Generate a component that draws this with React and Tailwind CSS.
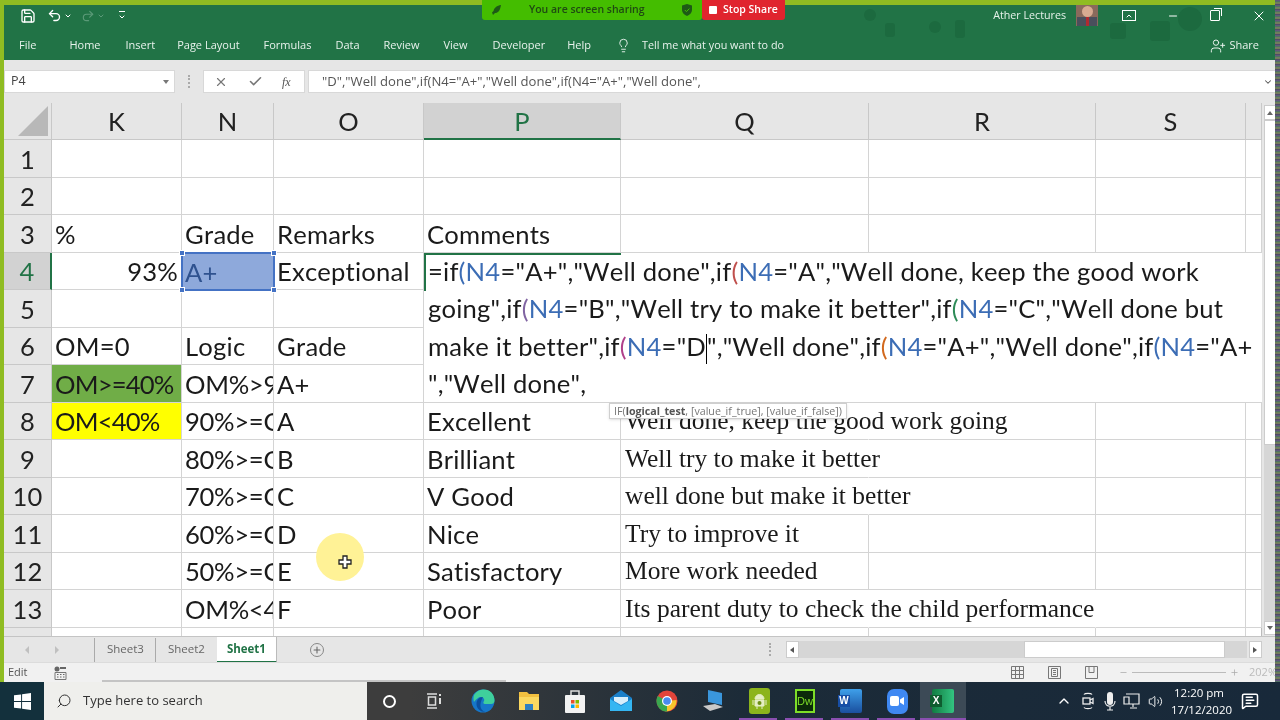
import React from 'react';
import { Save, Undo2, Redo2, Lightbulb, UserPlus, X, Check, ChevronDown, Minus, Plus, ChevronUp, Volume2, MessageSquareText, Search } from 'lucide-react';

const sans = "font-['Lato','Open_Sans',sans-serif] [font-kerning:none] tracking-[0.2px]";

const Win = () => (
  <svg width="17" height="17" viewBox="0 0 16 16"><path fill="#fff" d="M0 2.2 6.7 1.3v6.2H0zM7.6 1.2 16 0v7.5H7.6zM0 8.4h6.7v6.3L0 13.8zM7.6 8.4H16V16l-8.4-1.2z"/></svg>
);
const Edge = () => (
  <svg width="24" height="24" viewBox="0 0 24 24"><circle cx="12" cy="12" r="11.5" fill="#1676c9"/><path d="M3 6C6 1.500 10 .5 13 .5c6 0 10.500 4.500 10.500 11 0 2.500-1.500 3.500-3.500 3.500h-6c-2 0-2-1.500-1-3 .8-1.500-.5-4-3.500-4C8 8 5 10 3 13c-.8-2.500-.6-5 0-7z" fill="#3fcf9c"/><path d="M12 8c-4 0-6.500 3-6.500 7 0 4.500 4 8 9 8-3.500-1-5.500-4-5-8 .3-2.500 1.500-5 2.500-7z" fill="#0c4f9e"/></svg>
);
const Folder = () => (
  <svg width="22" height="22" viewBox="0 0 22 22"><path d="M1 2h8l2 2h10v16H1z" fill="#f2c040"/><path d="M1 7h20v13H1z" fill="#fbd860"/><rect x="7" y="14" width="8" height="6" fill="#2f7fc1"/></svg>
);
const Store = () => (
  <svg width="24" height="26" viewBox="0 0 24 26"><path d="M8 7V3h8v4" fill="none" stroke="#ddd" strokeWidth="1.5"/><rect x="2" y="7" width="20" height="18" rx="1" fill="#f2f2f2"/><rect x="8" y="12" width="3.5" height="3.5" fill="#e8502c"/><rect x="12.500" y="12" width="3.5" height="3.5" fill="#7fba00"/><rect x="8" y="16.500" width="3.5" height="3.5" fill="#00a4ef"/><rect x="12.500" y="16.500" width="3.5" height="3.5" fill="#ffb900"/></svg>
);
const Mail = () => (
  <svg width="24" height="24" viewBox="0 0 24 24"><path d="M1 9 12 1l11 8v13H1z" fill="#1a7fc9"/><path d="M1 10l11 7 11-7v12H1z" fill="#35b6f2"/><path d="M5 8h14v4l-7 4-7-4z" fill="#d8eefb"/></svg>
);
const Chrome = () => (
  <svg width="22" height="22" viewBox="0 0 22 22"><circle cx="11" cy="11" r="10.5" fill="#e2443a"/><path d="M11 11 1.800 16A10.500 10.500 0 0 1 1.800 6z" fill="#39a84f"/><path d="M11 11l9.500-1A10.500 10.500 0 0 1 9 21.300z" fill="#f7c52c"/><path d="M11 11 1.600 16A10.500 10.500 0 0 0 11 21.500z" fill="#39a84f"/><circle cx="11" cy="11" r="5" fill="#fff"/><circle cx="11" cy="11" r="3.800" fill="#4a8bf0"/></svg>
);
const Laptop = () => (
  <svg width="24" height="24" viewBox="0 0 24 24"><path d="M7 1l14 3v12L7 13z" fill="#3a96dc"/><path d="M2 17l12-2 8 3-13 4z" fill="#c9c9c9"/></svg>
);
const Android = () => (
  <div className="w-[21px] h-[26px] rounded-[3px] bg-[#8cb41c] flex items-center justify-center">
    <svg width="15" height="18" viewBox="0 0 15 18"><path d="M3 7a4.500 4.500 0 0 1 9 0zM3 8h9v6H3zM1 8v5M14 8v5M5 14v3M10 14v3" fill="#e4edc4" stroke="#e4edc4"/><circle cx="7.500" cy="11" r="2" fill="#6b8f14"/></svg>
  </div>
);
const Dw = () => (
  <div className="w-[20px] h-[24px] bg-[#0c2a0a] border-2 border-[#7ede28] flex items-center justify-center text-[#7ede28] text-[11px] font-['Liberation_Sans',sans-serif]">Dw</div>
);
const Word = () => (
  <div className="relative w-[22px] h-[24px] rounded-[2px] bg-gradient-to-b from-[#3fa0ea] to-[#1b4f9e]">
    <span className="absolute left-[-2px] top-[6px] w-[12px] h-[12px] bg-[#174ea6] text-white text-[10px] leading-[12px] font-bold text-center font-['Liberation_Sans',sans-serif]">W</span>
  </div>
);
const Zoom = () => (
  <div className="w-[21px] h-[25px] rounded-[7px] bg-[#3f88f2] flex items-center justify-center">
    <svg width="14" height="10" viewBox="0 0 14 10"><rect width="9" height="10" rx="2" fill="#fff"/><path d="M10 3.500 14 1v8l-4-2.500z" fill="#fff"/></svg>
  </div>
);
const XL = () => (
  <div className="relative w-[22px] h-[24px] rounded-[2px] bg-gradient-to-r from-[#107c41] to-[#33c481]">
    <span className="absolute left-[-2px] top-[6px] w-[12px] h-[12px] bg-[#0e5c2f] text-white text-[10px] leading-[12px] font-bold text-center font-['Liberation_Sans',sans-serif]">X</span>
  </div>
);
const TaskView = () => (
  <svg width="16" height="16" viewBox="0 0 16 16" fill="none" stroke="#ddd"><path d="M0 1h10M0 15h10" strokeWidth="1.500"/><rect x="1.500" y="4" width="7" height="8" strokeWidth="1.500"/><path d="M13 1v2M13 5v6" strokeWidth="2"/></svg>
);
const GridIcon = () => (
  <svg width="13" height="13" viewBox="0 0 13 13" fill="none" stroke="#777"><path d="M.5.5h12v12H.5zM4.500.5v12M8.500.5v12M.5 4.500h12M.5 8.500h12"/></svg>
);
const PageIcon = () => (
  <svg width="13" height="13" viewBox="0 0 13 13" fill="none" stroke="#777"><path d="M.5.5h12v12H.5zM3.500 2.500h6v8h-6zM5 4.500h3M5 6.500h3M5 8.500h3"/></svg>
);
const BreakIcon = () => (
  <svg width="13" height="13" viewBox="0 0 13 13" fill="none" stroke="#777"><path d="M.5.5h12v12H.5zM4 .5v6h5v-6"/></svg>
);
const MacroIcon = () => (
  <svg width="13" height="14" viewBox="0 0 13 14"><circle cx="3" cy="3" r="2.500" fill="#666"/><path d="M6 1h6v2H6z" fill="#666"/><path d="M1 6.500h11v7H1z" fill="none" stroke="#777"/><path d="M3 8.500h1.500M6 8.500h1.500M9 8.500h1.500M3 11h1.500M6 11h1.500M9 11h1.500" stroke="#666"/></svg>
);
const Meet = () => (
  <svg width="14" height="18" viewBox="0 0 14 18" fill="none" stroke="#eee" strokeWidth="1.300"><path d="M3 2.500C4 1 10 1 11 2.500M3 15.500c1 1.500 7 1.500 8 0"/><rect x="2" y="6" width="7" height="6"/><path d="M9 8l3-1.500v5L9 10"/></svg>
);
const MicIcon = () => (
  <svg width="12" height="19" viewBox="0 0 12 19"><rect x="3" y="0" width="6" height="13" rx="3" fill="#eee"/><path d="M1 9c0 7 10 7 10 0M6 15v3M3 18h6" stroke="#eee" fill="none" strokeWidth="1.200"/></svg>
);
const Net = () => (
  <svg width="17" height="16" viewBox="0 0 17 16" fill="none" stroke="#eee" strokeWidth="1.200"><path d="M3 1h13v10H6M1 4h5v7H1zM10 11v3M7 15h7"/></svg>
);
const Shield = () => (
  <svg width="10" height="12" viewBox="0 0 10 12"><path d="M5 0l5 1.500V6c0 3-2.500 5-5 6-2.500-1-5-3-5-6V1.500z" fill="#1e5a16"/><path d="M2.800 6l1.600 1.600 3-3" stroke="#46bd00" fill="none"/></svg>
);
const Leaf = () => (
  <svg width="10" height="10" viewBox="0 0 10 10"><path d="M9 0C5 .5 2 3 1.500 6L0 7.500 1 10l2-2c3 0 5-2 6-8z" fill="#1e5a16"/></svg>
);

const rows = [
  { n: 1 }, { n: 2 },
  { n: 3, k: '%', nn: 'Grade', o: 'Remarks', p: 'Comments' },
  { n: 4, k: '93%', nn: 'A+', o: 'Exceptional' },
  { n: 5 },
  { n: 6, k: 'OM=0', nn: 'Logic', o: 'Grade' },
  { n: 7, k: 'OM>=40%', nn: 'OM%>9', o: 'A+', kc: 'bg-[#70ad47]' },
  { n: 8, k: 'OM<40%', nn: '90%>=C', o: 'A', p: 'Excellent', q: 'Well done, keep the good work going', kc: 'bg-[#ffff00]', span: 1 },
  { n: 9, nn: '80%>=C', o: 'B', p: 'Brilliant', q: 'Well try to make it better', span: 1 },
  { n: 10, nn: '70%>=C', o: 'C', p: 'V Good', q: 'well done but make it better', span: 1 },
  { n: 11, nn: '60%>=C', o: 'D', p: 'Nice', q: 'Try to improve it' },
  { n: 12, nn: '50%>=C', o: 'E', p: 'Satisfactory', q: 'More work needed' },
  { n: 13, nn: 'OM%<4', o: 'F', p: 'Poor', q: 'Its parent duty to check the child performance', span: 2 },
];

const cellBase = 'border-r border-b border-[#d4d4d4] px-[3px] pt-[1px] overflow-hidden whitespace-nowrap flex items-center text-[25.6px] text-[#1a1a1a] ' + sans;
const hdr = 'bg-[#e6e6e6] border-r border-b border-[#c8c8c8] flex items-center justify-center pt-[1px] text-[25.5px] text-[#222] ' + sans;

const Blue = ({ c }) => <><span className={c}>(</span><span className="text-[#3c6db5]">N4</span></>;

const Handle = ({ className }) => <span className={'absolute w-[6px] h-[6px] bg-[#4472c4] border border-white ' + className} />;

const AppCell = ({ children, bar, extra = '' }) => (
  <div className={'relative w-[46px] h-full flex justify-center items-center ' + extra}>
    {children}
    {bar && <span className="absolute left-[3px] right-[5px] bottom-0 h-[2px] bg-[#8a4fb0]" />}
  </div>
);

export default function App() {
  return (
    <div className="relative w-[1280px] h-[720px] overflow-hidden flex flex-col bg-[#e6e6e6] font-['Open_Sans',sans-serif] blur-[0.3px]">
      {/* Lime strip */}
      <div className="h-[5px] bg-[#8fbc22] shrink-0" />
      <div className="flex-1 flex min-h-0">
        <div className="w-[4px] bg-[#8fbc22] shrink-0" />
        <div className="flex-1 flex flex-col min-w-0">
          {/* Title bar */}
          <div className="h-[26px] bg-[#217346] flex items-center text-white shrink-0 pb-[5px]">
            <div className="ml-[16px] flex items-center">
              <Save size={16} strokeWidth={2} />
              <Undo2 size={15} className="ml-[11px]" strokeWidth={2.2} />
              <ChevronDown size={8} className="ml-[2px]" strokeWidth={3} />
              <Redo2 size={14} className="ml-[9px] text-[#5b9a78]" />
              <ChevronDown size={8} className="ml-[2px] text-[#5b9a78]" strokeWidth={3} />
              <span className="ml-[13px] flex flex-col items-center gap-[1px]">
                <span className="w-[6px] h-[1px] bg-white" />
                <ChevronDown size={8} strokeWidth={3} />
              </span>
            </div>
            <div className="ml-auto flex items-center">
              <span className="text-[10.7px] text-[#e6f2ea]">Ather Lectures</span>
              <div className="ml-[10px] w-[22px] h-[21px] bg-[#8a6a5c] flex flex-col items-center overflow-hidden">
                <span className="mt-[1px] w-[11px] h-[12px] rounded-full bg-[#d8ab92]" />
                <span className="w-[20px] h-[9px] bg-[#4a4f5c] flex justify-center"><span className="w-[3px] h-[9px] bg-[#b02a30]" /></span>
              </div>
              <span className="ml-[24px] w-[14px] h-[11px] border border-white flex items-center justify-center"><ChevronUp size={8} strokeWidth={3} /></span>
              <Minus size={12} className="ml-[31px]" />
              <span className="ml-[31px] relative w-[10px] h-[11px] border border-white rounded-[1px]"><span className="absolute -top-[3px] -right-[3px] w-[8px] h-[8px] border-t border-r border-white" /></span>
              <X size={16} className="ml-[31px] mr-[13px]" strokeWidth={1.5} />
            </div>
          </div>
          {/* Ribbon tabs */}
          <div className="h-[29px] bg-[#217346] flex items-center text-[11px] text-[#e8f2ec] shrink-0 relative">
            <span className="ml-[15px]">File</span>
            <span className="ml-[33px]">Home</span>
            <span className="ml-[25px]">Insert</span>
            <span className="ml-[22px]">Page Layout</span>
            <span className="ml-[24px]">Formulas</span>
            <span className="ml-[24px]">Data</span>
            <span className="ml-[24px]">Review</span>
            <span className="ml-[24px]">View</span>
            <span className="ml-[25px]">Developer</span>
            <span className="ml-[22px]">Help</span>
            <Lightbulb size={15} className="ml-[25px]" strokeWidth={1.5} />
            <span className="ml-[11px] text-[10.8px]">Tell me what you want to do</span>
            <span className="ml-auto mr-[21px] flex items-center gap-[3px]"><UserPlus size={16} strokeWidth={1.5} />Share</span>
          </div>
          {/* Formula bar */}
          <div className="h-[43px] bg-[#e6e6e6] flex items-center shrink-0 pr-[2px]">
            <div className="w-[171px] h-[23px] bg-white border border-[#d8d8d8] flex items-center justify-between pl-[6px] pr-[3px] text-[12.5px] text-[#444]">
              <span>P4</span><span className="w-0 h-0 border-x-[3px] border-x-transparent border-t-[4px] border-t-[#777] mr-[2px]" />
            </div>
            <div className="ml-[13px] w-[2px] h-[13px] border-l-2 border-dotted border-[#aaa]" />
            <div className="ml-[13px] w-[102px] h-[23px] bg-white border border-[#d8d8d8] flex items-center text-[#777]">
              <X size={14} className="ml-[10px]" />
              <Check size={15} className="ml-[20px]" strokeWidth={2.5} />
              <span className="ml-[19px] text-[12px] italic font-['Liberation_Serif',serif] text-[#555]">fx</span>
            </div>
            <div className="ml-[3px] flex-1 h-[23px] bg-white border border-[#d8d8d8] flex items-center pl-[13px] pr-[4px] text-[13.1px] text-[#555]">
              <span className="whitespace-nowrap">"D","Well done",if(N4="A+","Well done",if(N4="A+","Well done",</span>
              <ChevronDown size={10} className="ml-auto" strokeWidth={2.5} />
            </div>
          </div>
          {/* Sheet */}
          <div className="flex-1 flex min-h-0 bg-white">
            <div className="relative w-[1258px] border-r border-[#bbb] grid grid-cols-[48px_130px_92px_150px_197px_248px_227px_150px_16px] grid-rows-[37px_repeat(13,37.5px)_8.5px] shrink-0">
              {/* Header row */}
              <div className={hdr + ' items-end justify-end'}>
                <span className="w-0 h-0 border-l-[30px] border-l-transparent border-b-[30px] border-b-[#b8b8b8] mr-[3px] mb-[3px]" />
              </div>
              {['K', 'N', 'O', 'P', 'Q', 'R', 'S', ''].map((c) => (
                <div key={c || 'e'} className={c === 'P' ? 'bg-[#d2d2d2] border-r border-b-2 border-[#c8c8c8] border-b-[#217346] flex items-center justify-center pt-[1px] text-[25.5px] text-[#217346] ' + sans : hdr}>{c}</div>
              ))}
              {rows.map((r) => {
                const hidden = r.n >= 4 && r.n <= 7;
                return (
                  <React.Fragment key={r.n}>
                    <div className={r.n === 4 ? 'bg-[#d2d2d2] border-r-2 border-b border-[#c8c8c8] border-r-[#217346] flex items-center justify-center pt-[1px] text-[25.5px] text-[#217346] ' + sans : hdr}>{r.n}</div>
                    <div className={cellBase + ' ' + (r.kc || '') + (r.k === '93%' ? ' justify-end' : '')}>
                      <span className={r.n === 7 || r.n === 8 ? 'tracking-[-0.8px]' : ''}>{r.k}</span>
                    </div>
                    {r.n === 4 ? (
                      <div className="relative bg-[#8ea9db] border-2 border-[#4472c4] flex items-center px-[2px] pt-[1px] text-[25.6px] text-[#2f528f] -my-px -mx-px z-10 outline outline-1 outline-white">
                        <span className={sans}>A+</span>
                        <Handle className="-left-[4px] -top-[4px]" /><Handle className="-right-[4px] -top-[4px]" /><Handle className="-left-[4px] -bottom-[4px]" /><Handle className="-right-[4px] -bottom-[4px]" />
                      </div>
                    ) : (
                      <div className={cellBase}>
                        <span className={r.n >= 7 ? 'tracking-[-0.3px]' : ''}>{r.nn}</span>
                      </div>
                    )}
                    <div className={cellBase}>{r.o}</div>
                    {hidden ? null : <div className={cellBase}>{r.p}</div>}
                    {hidden ? null : (
                      <div className={"border-b border-[#d4d4d4] px-[4px] pt-[1px] whitespace-nowrap flex items-center text-[25.5px] text-[#1a1a1a] font-['Liberation_Serif',serif] " + (r.span ? 'border-r border-r-transparent' : 'border-r')}>{r.q}</div>
                    )}
                    {hidden ? null : <div className={'border-b border-[#d4d4d4] ' + (r.span === 2 ? 'border-r border-r-transparent' : 'border-r')} />}
                    {hidden ? null : <div className={cellBase} />}
                    {hidden ? null : <div className={cellBase} />}
                  </React.Fragment>
                );
              })}
              {/* Editor overlay */}
              <div className={'col-start-5 col-end-10 row-start-5 row-end-9 bg-white border-b border-[#d4d4d4] pl-[4px] text-[25.6px] leading-[37.5px] whitespace-nowrap text-[#1a1a1a] relative ' + sans}>
                <div>=if<Blue c="text-[#3c6db5]" />="A+","Well done",if<Blue c="text-[#c0504d]" />="A","Well done, keep the good work</div>
                <div>going",if<Blue c="text-[#8064a2]" />="B","Well try to make it better",if<Blue c="text-[#2e8b57]" />="C","Well done but</div>
                <div>make it better",if<Blue c="text-[#b0408a]" />="D<span className="inline-block w-px h-[30px] bg-black align-middle" />","Well done",if<Blue c="text-[#d2691e]" />="A+","Well done",if<Blue c="text-[#3c6db5]" />="A+</div>
                <div>","Well done",</div>
                <div className="absolute left-0 top-0 w-[197px] h-[2px] bg-[#217346]" />
                <div className="absolute left-0 top-0 w-[2px] h-[38px] bg-[#217346]" />
              </div>
              {/* Bottom partial row */}
              <div className="bg-[#e6e6e6] border-r border-[#c8c8c8]" />
              <div className="border-r border-[#d4d4d4]" /><div className="border-r border-[#d4d4d4]" /><div className="border-r border-[#d4d4d4]" /><div className="border-r border-[#d4d4d4]" /><div className="border-r border-[#d4d4d4]" /><div className="border-r border-[#d4d4d4]" /><div className="border-r border-[#d4d4d4]" /><div />
              {/* Tooltip */}
              <div className="absolute left-[605px] top-[300px] h-[16px] px-[4px] bg-white border border-[#cfcfcf] shadow-sm flex items-center text-[10.7px] text-[#777] whitespace-nowrap z-20 font-['Open_Sans',sans-serif]">
                IF(<b className="text-[#555]">logical_test</b>, [value_if_true], [value_if_false])
              </div>
              {/* Cursor highlight */}
              <div className="absolute left-[312px] top-[430px] w-[48px] h-[48px] rounded-full bg-[#fff296] flex items-center justify-center z-[5]">
                <svg className="ml-[10px] mt-[10px]" width="14" height="14" viewBox="0 0 14 14"><path d="M5 1h4v4h4v4H9v4H5V9H1V5h4z" fill="#fff" stroke="#222" strokeWidth="1.3"/></svg>
              </div>
            </div>
            {/* Vertical scrollbar */}
            <div className="flex-1 bg-[#e6e6e6] flex flex-col pt-[2px] pb-[1px] pl-[2px]">
              <div className="w-[12px] h-[15px] bg-white border border-[#ccc] flex items-center justify-center shrink-0"><span className="w-0 h-0 border-x-[3px] border-x-transparent border-b-[4px] border-b-[#666]" /></div>
              <div className="w-[12px] h-[325px] bg-white border border-[#ccc] shrink-0" />
              <div className="w-[12px] flex-1 bg-[#d6d6d6]" />
              <div className="w-[12px] h-[14px] bg-white border border-[#ccc] flex items-center justify-center shrink-0"><span className="w-0 h-0 border-x-[3px] border-x-transparent border-t-[4px] border-t-[#666]" /></div>
            </div>
          </div>
          {/* Sheet tabs */}
          <div className="h-[26px] bg-[#e6e6e6] border-t border-[#c4c4c4] flex items-center shrink-0 text-[11.5px] text-[#666]">
            <span className="ml-[21px] w-0 h-0 border-y-[4px] border-y-transparent border-r-[4px] border-r-[#c0c0c0]" />
            <span className="ml-[26px] w-0 h-0 border-y-[4px] border-y-transparent border-l-[4px] border-l-[#c0c0c0]" />
            <span className="ml-[35px] h-[24px] border-l border-[#aaa] pl-[12px] pr-[11px] pb-[2px] flex items-center">Sheet3</span>
            <span className="h-[24px] border-l border-[#aaa] px-[12px] pb-[2px] flex items-center">Sheet2</span>
            <span className="h-[26px] w-[60px] bg-white border-b-2 border-[#217346] border-r border-r-[#bbb] flex items-center justify-center font-bold text-[#217346] self-start">Sheet1</span>
            <span className="ml-[33px] w-[14px] h-[14px] rounded-full border border-[#888] flex items-center justify-center"><Plus size={10} strokeWidth={2.5} /></span>
            <span className="ml-[445px] w-[2px] h-[13px] border-l-2 border-dotted border-[#aaa]" />
            <span className="ml-[15px] w-[13px] h-[17px] bg-white border border-[#ccc] flex items-center justify-center"><span className="w-0 h-0 border-y-[3px] border-y-transparent border-r-[4px] border-r-[#555]" /></span>
            <div className="w-[448px] h-[17px] bg-[#d6d6d6] flex">
              <span className="ml-[225px] w-[201px] h-[17px] bg-white border border-[#ccc]" />
            </div>
            <span className="ml-[2px] w-[13px] h-[17px] bg-white border border-[#ccc] flex items-center justify-center"><span className="w-0 h-0 border-y-[3px] border-y-transparent border-l-[4px] border-l-[#555]" /></span>
          </div>
          {/* Status bar */}
          <div className="h-[20px] bg-[#f1f1f1] flex items-center shrink-0 text-[11px] text-[#555] border-t border-[#dcdcdc]">
            <span className="ml-[4px]">Edit</span>
            <span className="ml-[26px] flex"><MacroIcon /></span>
            <div className="ml-auto flex items-center text-[#666]">
              <GridIcon />
              <span className="ml-[24px] flex"><PageIcon /></span>
              <span className="ml-[24px] flex"><BreakIcon /></span>
              <Minus size={9} className="ml-[21px] text-[#aaa]" />
              <span className="ml-[4px] w-[94px] h-px bg-[#bbb]" />
              <Plus size={9} className="ml-[4px] text-[#aaa]" />
              <span className="ml-[10px] mr-[3px] text-[#bbb]">202%</span>
            </div>
          </div>
        </div>
      </div>
      {/* Taskbar */}
      <div className="h-[38px] shrink-0 flex items-center bg-[linear-gradient(90deg,#3d3d3d_0%,#3d3d3d_32%,#1c2b38_58%,#18293a_100%)] text-white relative">
        <div className="w-[45px] h-full bg-[#13303c] flex items-center justify-center"><Win /></div>
        <div className="w-[323px] h-full bg-[#efefec] flex items-center text-[#333] text-[13px] -ml-px">
          <Search size={16} className="ml-[12px] -scale-x-100" strokeWidth={1.5} />
          <span className="ml-[11px]">Type here to search</span>
        </div>
        <div className="w-[45px] flex justify-center"><span className="w-[13px] h-[13px] rounded-full border-2 border-white" /></div>
        <div className="w-[46px] flex justify-center"><TaskView /></div>
        <AppCell extra="ml-[2px]"><Edge /></AppCell>
        <AppCell><Folder /></AppCell>
        <AppCell><Store /></AppCell>
        <AppCell><Mail /></AppCell>
        <AppCell><Chrome /></AppCell>
        <AppCell><Laptop /></AppCell>
        <AppCell bar><Android /></AppCell>
        <AppCell bar><Dw /></AppCell>
        <AppCell bar><Word /></AppCell>
        <AppCell bar><Zoom /></AppCell>
        <div className="relative w-[46px] h-full bg-[#3c4a56] flex justify-center items-center"><XL /><span className="absolute inset-x-0 bottom-0 h-[2px] bg-[#8a4fb0]" /></div>
        <div className="ml-auto flex items-center">
          <ChevronUp size={16} />
          <span className="ml-[9px] flex"><Meet /></span>
          <span className="ml-[9px] flex"><MicIcon /></span>
          <span className="ml-[7px] flex"><Net /></span>
          <Volume2 size={15} className="ml-[8px]" strokeWidth={1.5} />
          <div className="ml-[8px] w-[56px] text-center text-[11.5px] leading-[17px]">
            <div>12:20 pm</div><div>17/12/2020</div>
          </div>
          <MessageSquareText size={18} className="ml-[14px] mr-[21px]" />
        </div>
      </div>
      {/* Faint title bar artwork */}
      <svg className="absolute left-[850px] top-[5px]" width="360" height="40" viewBox="0 0 360 40" fill="#1c6a3f">
        <circle cx="20" cy="10" r="6" /><rect x="35" y="18" width="10" height="14" rx="3" /><circle cx="85" cy="22" r="6" /><rect x="105" y="15" width="10" height="18" rx="3" />
        <rect x="260" y="18" width="16" height="16" rx="3" /><rect x="300" y="16" width="20" height="20" rx="3" /><circle cx="340" cy="14" r="12" />
      </svg>
      {/* Shadow above taskbar */}
      <div className="absolute left-[102px] top-[680px] w-[404px] h-[2px] bg-[#c4c4c4]" />
      {/* Screen sharing */}
      <div className="absolute left-[482px] top-0 w-[220px] h-[20px] bg-[#44bd00] rounded-b-[3px] flex items-center text-[10.5px] font-semibold text-[#1f4a12]">
        <span className="ml-[10px] flex"><Leaf /></span>
        <span className="ml-[27px]">You are screen sharing</span>
        <span className="ml-auto mr-[10px] flex"><Shield /></span>
      </div>
      <div className="absolute left-[702px] top-0 w-[83px] h-[20px] bg-[#e0242e] rounded-b-[3px] flex items-center text-[10.5px] font-semibold text-white">
        <span className="ml-[7px] w-[8px] h-[8px] bg-white rounded-[1px]" />
        <span className="ml-[6px]">Stop Share</span>
      </div>
      {/* Capture noise at the right edge */}
      <div className="absolute right-0 top-0 w-[5px] h-[682px] bg-[repeating-linear-gradient(180deg,#6a4a8a_0px,#4a7a5a_2px,#8a8a5a_3px,#3a3a6a_5px)]" />
    </div>
  );
}
